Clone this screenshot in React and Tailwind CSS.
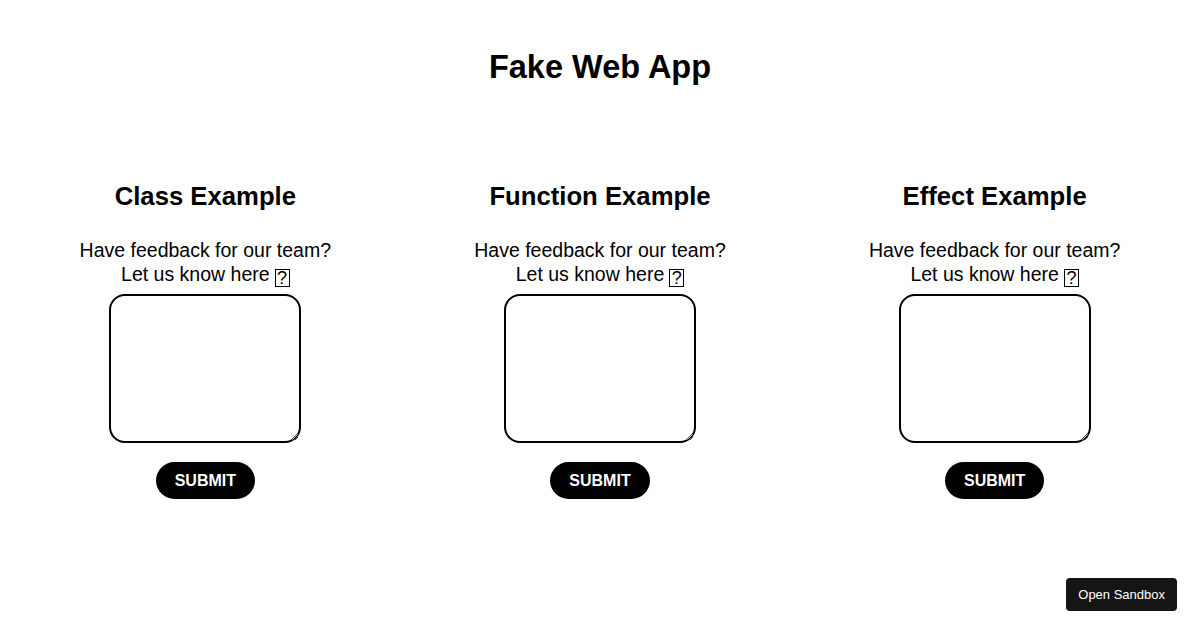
import React from 'react';

const Tofu = () => (
  <span className="inline-flex items-center justify-center w-[15px] h-[18px] border border-black text-[18px] leading-none align-[-3px] ml-[5px]">
    ?
  </span>
);

const FeedbackCard = ({ title }) => (
  <div className="flex flex-col items-center">
    <h2 className="text-[25.7px] font-bold leading-[28px]">{title}</h2>
    <p className="mt-[28px] text-[19.5px] leading-[24px] text-center">
      Have feedback for our team?
      <br />
      Let us know here<Tofu />
    </p>
    <textarea className="mt-[7px] w-[192px] h-[149px] border-2 border-black rounded-[16px] resize-y outline-none" />
    <button className="mt-[19px] h-[37px] px-[19px] rounded-full bg-black text-white text-[16px] font-bold">
      SUBMIT
    </button>
  </div>
);

const App = () => {
  return (
    <div className="relative w-[1200px] h-[630px] bg-white text-black font-['Liberation_Sans',Arial,sans-serif]">
      <h1 className="pt-[48px] text-[32.5px] font-bold leading-[38px] text-center">Fake Web App</h1>
      <div className="mt-[96px] grid grid-cols-3 px-2">
        <FeedbackCard title="Class Example" />
        <FeedbackCard title="Function Example" />
        <FeedbackCard title="Effect Example" />
      </div>
      <button className="absolute right-[23px] bottom-[19px] h-[33px] px-[12px] rounded-[4px] bg-[#151515] text-white text-[13px] font-['Liberation_Sans',Arial,sans-serif]">
        Open Sandbox
      </button>
    </div>
  );
};

export default App;
